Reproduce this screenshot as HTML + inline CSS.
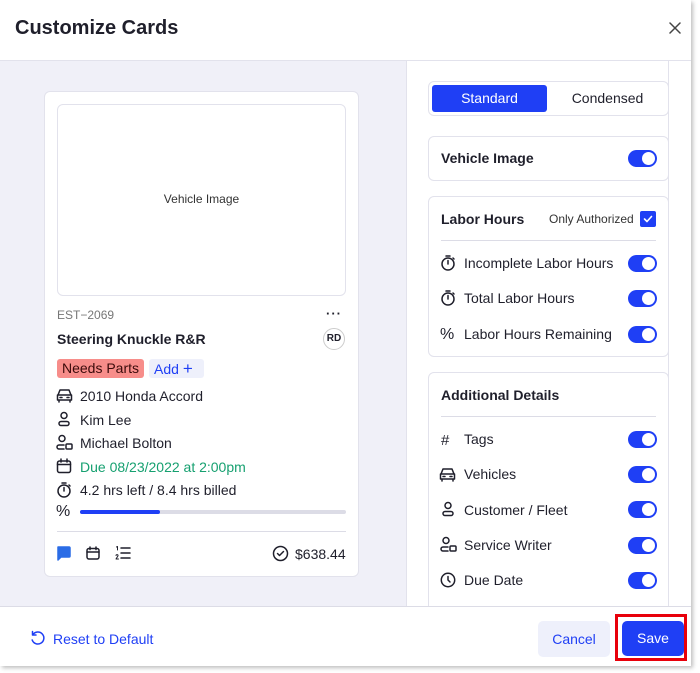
<!DOCTYPE html>
<html><head><style>
*{box-sizing:border-box;margin:0;padding:0}
body{width:700px;height:673px;background:#fff;font-family:"Liberation Sans",sans-serif;color:#1f1f2b;position:relative;overflow:hidden}
.a{position:absolute}
.modal{left:0;top:0;width:691px;height:666px;background:#fff;box-shadow:2px 2px 4px rgba(0,0,0,.25)}
.t{font-size:14px}
.tog{position:absolute;width:29px;height:17px;border-radius:9px;background:#1f3ff5}
.tog:after{content:"";position:absolute;right:2px;top:2px;width:13px;height:13px;border-radius:50%;background:#fff}
.box{position:absolute;border:1px solid #e2e2ec;border-radius:6px;background:#fff}
svg{position:absolute;fill:none;stroke:#1f1f2b;stroke-width:1.5;stroke-linecap:round;stroke-linejoin:round}
</style></head><body>
<div class="a modal"></div>
<div class="a" style="left:15px;top:17px;font-size:20px;font-weight:bold;color:#1f1f2b">Customize Cards</div>
<svg style="left:669px;top:22px" width="12" height="12" viewBox="0 0 12 12"><path d="M1 1L11 11M11 1L1 11" stroke="#444"/></svg>
<div class="a" style="left:0;top:60px;width:691px;height:1px;background:#e2e2ec"></div>
<div class="a" style="left:0;top:61px;width:407px;height:546px;background:#f0f0f8;border-right:1px solid #e2e2ec"></div>
<div class="a" style="left:668px;top:61px;width:1px;height:546px;background:#e2e2ec"></div>

<div class="box" style="left:44px;top:91px;width:315px;height:486px;border-radius:6px"></div>
<div class="box" style="left:57px;top:104px;width:289px;height:192px;border-radius:6px"></div>
<div class="a" style="left:57px;top:192px;width:289px;text-align:center;font-size:12px;color:#333">Vehicle Image</div>
<div class="a" style="left:57px;top:308px;font-size:12px;color:#777">EST−2069</div>
<div class="a" style="left:326px;top:306px;font-size:13px;letter-spacing:1px;font-weight:bold">···</div>
<div class="a" style="left:57px;top:331px;font-size:14px;font-weight:bold">Steering Knuckle R&amp;R</div>
<div class="a" style="left:323px;top:328px;width:22px;height:22px;border:1px solid #ccc;border-radius:50%;font-size:10px;font-weight:bold;text-align:center;line-height:20px">RD</div>
<div class="a" style="left:57px;top:359px;width:87px;height:19px;background:#f78d8a;border-radius:3px;font-size:14px;line-height:19px;text-align:center;color:#3a0a0a">Needs Parts</div>
<div class="a" style="left:149px;top:359px;width:55px;height:19px;background:#eef0fb;border-radius:3px;font-size:14px;line-height:19px;padding-left:5px;color:#1f3ff5">Add <span style="font-size:17px">+</span></div>
<svg style="left:56px;top:387px" width="17" height="16" viewBox="0 0 17 16"><path d="M2 8L4 3H13L15 8M1.5 8H15.5V13H1.5ZM3 13V15M14 13V15M4 10.5H6M11 10.5H13"/></svg>
<div class="a t" style="left:80px;top:388px">2010 Honda Accord</div>
<svg style="left:57px;top:411px" width="14" height="16" viewBox="0 0 14 16"><circle cx="7" cy="4.5" r="3"/><rect x="2" y="10.5" width="10" height="4" rx="2"/></svg>
<div class="a t" style="left:80px;top:412px">Kim Lee</div>
<svg style="left:56px;top:434px" width="18" height="16" viewBox="0 0 18 16"><circle cx="6" cy="4.5" r="3"/><path d="M8 11H3a2 2 0 000 4h5"/><rect x="10" y="10" width="6" height="5" rx="1"/></svg>
<div class="a t" style="left:80px;top:435px">Michael Bolton</div>
<svg style="left:56px;top:458px" width="16" height="16" viewBox="0 0 16 16"><rect x="1.5" y="3" width="13" height="11.5" rx="2"/><path d="M1.5 6.5H14.5M5 1V4M11 1V4"/></svg>
<div class="a t" style="left:80px;top:459px;color:#16a070">Due 08/23/2022 at 2:00pm</div>
<svg style="left:56px;top:481px" width="16" height="17" viewBox="0 0 16 17"><circle cx="8" cy="10" r="6"/><path d="M8 10V6.5M6 2H10M13 4L14 5"/></svg>
<div class="a t" style="left:80px;top:482px">4.2 hrs left / 8.4 hrs billed</div>
<div class="a" style="left:56px;top:503px;font-size:16px">%</div>
<div class="a" style="left:80px;top:510px;width:266px;height:4px;border-radius:2px;background:#dcdce6"></div>
<div class="a" style="left:80px;top:510px;width:80px;height:4px;border-radius:2px;background:#1f3ff5"></div>
<div class="a" style="left:57px;top:531px;width:289px;height:1px;background:#dcdce6"></div>
<svg style="left:56px;top:546px" width="15" height="15" viewBox="0 0 15 15"><path d="M2 1H13a1 1 0 011 1V10a1 1 0 01-1 1H5L2 14Z" fill="#2a6ce6" stroke="#2a6ce6"/></svg>
<svg style="left:86px;top:546px" width="14" height="14" viewBox="0 0 14 14"><rect x="1" y="2.5" width="12" height="10.5" rx="2"/><path d="M1 6H13M4 1V3.5M10 1V3.5"/></svg>
<svg style="left:115px;top:545px" width="16" height="16" viewBox="0 0 16 16"><path d="M6 3H15M6 8H15M6 13H15"/><path d="M1.5 2L2.5 1.5V5M1 10.5a1 1 0 012 .3L1 14H3.5" stroke-width="1"/></svg>
<svg style="left:272px;top:545px" width="17" height="17" viewBox="0 0 17 17"><circle cx="8.5" cy="8.5" r="7"/><path d="M5.5 8.5L7.5 10.5L11.5 6.5"/></svg>
<div class="a t" style="left:295px;top:546px">$638.44</div>

<div class="box" style="left:428px;top:81px;width:241px;height:35px"></div>
<div class="a" style="left:432px;top:85px;width:115px;height:27px;background:#1f3ff5;border-radius:3px;color:#fff;font-size:14px;text-align:center;line-height:27px">Standard</div>
<div class="a" style="left:550px;top:85px;width:115px;height:27px;font-size:14px;text-align:center;line-height:27px">Condensed</div>

<div class="box" style="left:428px;top:136px;width:241px;height:45px"></div>
<div class="a t" style="left:441px;top:150px;font-weight:bold">Vehicle Image</div>
<div class="tog" style="left:628px;top:150px"></div>

<div class="box" style="left:428px;top:196px;width:241px;height:161px"></div>
<div class="a t" style="left:441px;top:211px;font-weight:bold">Labor Hours</div>
<div class="a" style="left:549px;top:212px;font-size:12px;color:#333">Only Authorized</div>
<div class="a" style="left:640px;top:211px;width:16px;height:16px;background:#1f3ff5;border-radius:2px"></div>
<svg style="left:643px;top:214px;stroke:#fff;stroke-width:1.6" width="10" height="10" viewBox="0 0 10 10"><path d="M1.5 5L4 7.5L8.5 2.5"/></svg>
<div class="a" style="left:441px;top:240px;width:215px;height:1px;background:#dcdce6"></div>
<svg style="left:440px;top:254px" width="16" height="17" viewBox="0 0 16 17"><circle cx="8" cy="10" r="6"/><path d="M8 10V6.5M6 2H10M13 4L14 5"/></svg>
<div class="a t" style="left:464px;top:255px">Incomplete Labor Hours</div>
<div class="tog" style="left:628px;top:255px"></div>
<svg style="left:440px;top:289px" width="16" height="17" viewBox="0 0 16 17"><circle cx="8" cy="10" r="6"/><path d="M8 10V6.5M6 2H10M13 4L14 5"/></svg>
<div class="a t" style="left:464px;top:290px">Total Labor Hours</div>
<div class="tog" style="left:628px;top:290px"></div>
<div class="a" style="left:440px;top:326px;font-size:16px">%</div>
<div class="a t" style="left:464px;top:326px">Labor Hours Remaining</div>
<div class="tog" style="left:628px;top:326px"></div>

<div class="box" style="left:428px;top:372px;width:241px;height:250px"></div>
<div class="a t" style="left:441px;top:387px;font-weight:bold">Additional Details</div>
<div class="a" style="left:441px;top:416px;width:215px;height:1px;background:#dcdce6"></div>
<div class="a" style="left:441px;top:432px;font-size:15px">#</div>
<div class="a t" style="left:464px;top:431px">Tags</div>
<div class="tog" style="left:628px;top:431px"></div>
<svg style="left:439px;top:466px" width="17" height="16" viewBox="0 0 17 16"><path d="M2 8L4 3H13L15 8M1.5 8H15.5V13H1.5ZM3 13V15M14 13V15M4 10.5H6M11 10.5H13"/></svg>
<div class="a t" style="left:464px;top:466px">Vehicles</div>
<div class="tog" style="left:628px;top:466px"></div>
<svg style="left:441px;top:501px" width="14" height="16" viewBox="0 0 14 16"><circle cx="7" cy="4.5" r="3"/><rect x="2" y="10.5" width="10" height="4" rx="2"/></svg>
<div class="a t" style="left:464px;top:502px">Customer / Fleet</div>
<div class="tog" style="left:628px;top:501px"></div>
<svg style="left:440px;top:536px" width="18" height="16" viewBox="0 0 18 16"><circle cx="6" cy="4.5" r="3"/><path d="M8 11H3a2 2 0 000 4h5"/><rect x="10" y="10" width="6" height="5" rx="1"/></svg>
<div class="a t" style="left:464px;top:537px">Service Writer</div>
<div class="tog" style="left:628px;top:537px"></div>
<svg style="left:440px;top:572px" width="16" height="16" viewBox="0 0 16 16"><circle cx="8" cy="8" r="6.7"/><path d="M8 4.5V8L10 10"/></svg>
<div class="a t" style="left:464px;top:572px">Due Date</div>
<div class="tog" style="left:628px;top:572px"></div>

<div class="a" style="left:0;top:606px;width:691px;height:60px;background:#fff;border-top:1px solid #dcdce6"></div>
<svg style="left:30px;top:630px;stroke:#1f3ff5" width="15" height="16" viewBox="0 0 15 16"><path d="M3 4.5A6 6 0 1 1 2.2 10M2.5 1.5V5H6"/></svg>
<div class="a t" style="left:53px;top:631px;color:#1f3ff5">Reset to Default</div>
<div class="a" style="left:538px;top:621px;width:72px;height:36px;background:#eef0fb;border-radius:5px;color:#1f3ff5;font-size:14px;text-align:center;line-height:36px">Cancel</div>
<div class="a" style="left:615px;top:614px;width:72px;height:47px;border:3px solid #e8000b"></div>
<div class="a" style="left:622px;top:621px;width:62px;height:35px;background:#1f3ff5;border-radius:5px;color:#fff;font-size:14px;text-align:center;line-height:35px">Save</div>
</body></html>
